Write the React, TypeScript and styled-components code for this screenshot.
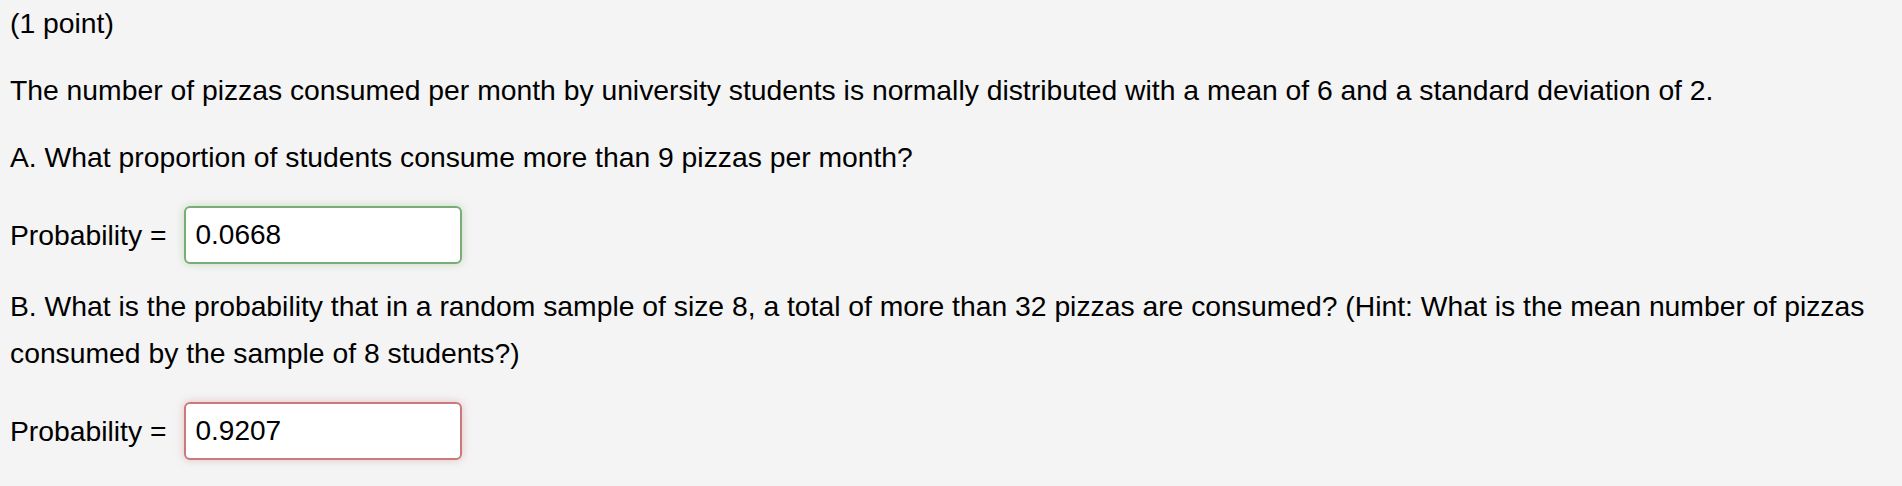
import styled, { createGlobalStyle } from "styled-components"

const GlobalStyle = createGlobalStyle`
  html, body {
    margin: 0;
    padding: 0;
    background: #f4f4f4;
  }
`

type AnswerState = "correct" | "incorrect"

const Page = styled.div`
  padding: 0 10px;
  font-family: "Liberation Sans", Arial, Helvetica, sans-serif;
  font-size: 28.3px;
  line-height: 47px;
  color: #000;
  background: #f4f4f4;
  min-height: 486px;
  box-sizing: border-box;
`

const Para = styled.p`
  margin: 0 0 20px 0;
`

const AnswerRow = styled.div`
  display: flex;
  align-items: center;
  gap: 17px;
  margin: 25px 0 19px 0;
`

const Label = styled.span`
  white-space: nowrap;
`

const AnswerBox = styled.input<{ $state: AnswerState }>`
  width: 278px;
  height: 58px;
  box-sizing: border-box;
  padding: 0 10px;
  font-family: inherit;
  font-size: 28px;
  color: #000;
  background: #fff;
  border-radius: 6px;
  outline: none;
  border: 2px solid ${(p) => (p.$state === "correct" ? "#7aad76" : "#c97a7a")};
  box-shadow: 0 0 9px
    ${(p) => (p.$state === "correct" ? "rgba(110, 170, 100, 0.35)" : "rgba(200, 100, 100, 0.35)")};
`

const App = () => {
  return (
    <>
      <GlobalStyle />
      <Page>
        <Para>(1 point)</Para>
        <Para>
          The number of pizzas consumed per month by university students is normally distributed
          with a mean of 6 and a standard deviation of 2.
        </Para>
        <Para>A. What proportion of students consume more than 9 pizzas per month?</Para>
        <AnswerRow>
          <Label>Probability =</Label>
          <AnswerBox $state="correct" defaultValue="0.0668" readOnly />
        </AnswerRow>
        <Para>
          B. What is the probability that in a random sample of size 8, a total of more than 32
          pizzas are consumed? (Hint: What is the mean number of pizzas consumed by the sample of 8
          students?)
        </Para>
        <AnswerRow>
          <Label>Probability =</Label>
          <AnswerBox $state="incorrect" defaultValue="0.9207" readOnly />
        </AnswerRow>
      </Page>
    </>
  )
}

export default App
